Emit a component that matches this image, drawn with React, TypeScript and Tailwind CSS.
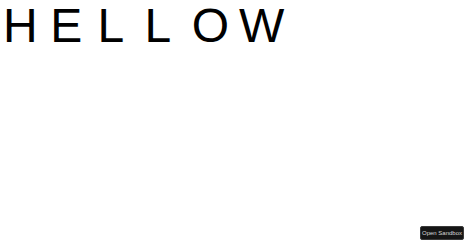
import React from "react";

export default function App() {
  const letters = ["H", "E", "L", "L", "O", "W"];
  return (
    <div className="relative w-[474px] h-[248px] bg-white overflow-hidden">
      <div className="flex pl-[3px] text-black text-[48px] leading-[51px] font-['Liberation_Sans',Arial,sans-serif]">
        {letters.map((l, i) => (
          <span key={i} className="w-[47.2px] shrink-0">
            {l}
          </span>
        ))}
      </div>
      <button className="absolute right-[10px] bottom-[8px] h-[14px] w-[44px] flex items-center justify-center rounded-[2px] border border-[#3a3a3a] bg-[#151515] text-[6px] text-[#d8d8d8] font-['Liberation_Sans',Arial,sans-serif] leading-none whitespace-nowrap">
        Open Sandbox
      </button>
    </div>
  );
}
